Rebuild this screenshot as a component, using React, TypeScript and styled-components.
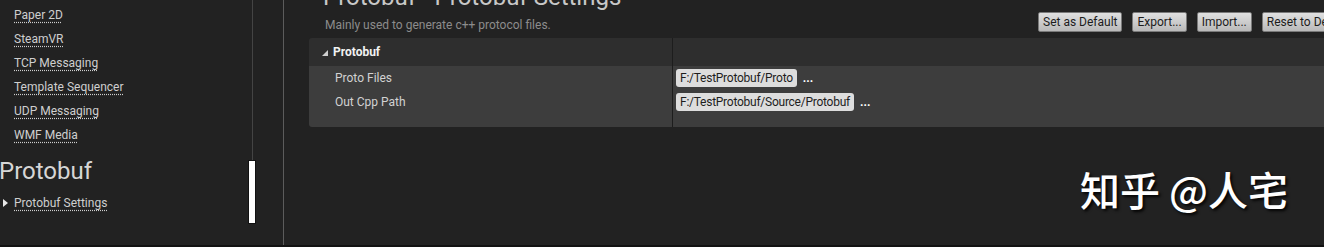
import React from "react";
import styled, { createGlobalStyle } from "styled-components";

const GlobalStyle = createGlobalStyle`
   html, body {
      margin: 0;
      padding: 0;
      background: #222222;
      font-family: Roboto, "Liberation Sans", sans-serif;
      overflow: hidden;
   }
`;

const categories = ["Paper 2D", "SteamVR", "TCP Messaging", "Template Sequencer", "UDP Messaging", "WMF Media"];

const properties = [
   { name: "Proto Files", value: "F:/TestProtobuf/Proto" },
   { name: "Out Cpp Path", value: "F:/TestProtobuf/Source/Protobuf" },
];

const buttons = ["Set as Default", "Export...", "Import...", "Reset to Defaults"];

const App = () => {
   return (
      <>
         <GlobalStyle />
         <Page>
            <Sidebar>
               <NavColumn>
                  <NavList>
                     {categories.map((name) => (
                        <NavItem key={name}>
                           <NavLink>{name}</NavLink>
                        </NavItem>
                     ))}
                  </NavList>
                  <SectionTitle>Protobuf</SectionTitle>
                  <NavItem>
                     <Arrow />
                     <NavLink>Protobuf Settings</NavLink>
                  </NavItem>
               </NavColumn>
               <ScrollBar>
                  <Track />
                  <Thumb />
               </ScrollBar>
            </Sidebar>

            <Main>
               <Header>
                  <HeaderText>
                     <Title>Protobuf - Protobuf Settings</Title>
                     <Subtitle>Mainly used to generate c++ protocol files.</Subtitle>
                  </HeaderText>
                  <ButtonRow>
                     {buttons.map((b) => (
                        <Button key={b}>{b}</Button>
                     ))}
                  </ButtonRow>
               </Header>

               <Panel>
                  <PanelHeader>
                     <NameCell>
                        <Expander />
                        <GroupName>Protobuf</GroupName>
                     </NameCell>
                     <ValueCell />
                  </PanelHeader>
                  <PanelBody>
                     <NameColumn>
                        {properties.map((p) => (
                           <PropName key={p.name}>{p.name}</PropName>
                        ))}
                     </NameColumn>
                     <ValueColumn>
                        {properties.map((p) => (
                           <PropValue key={p.name}>
                              <PathBox>{p.value}</PathBox>
                              <Browse>...</Browse>
                           </PropValue>
                        ))}
                     </ValueColumn>
                  </PanelBody>
               </Panel>
            </Main>

            <Watermark>知乎 @人宅</Watermark>
         </Page>
         <BottomEdge />
      </>
   );
};

const Page = styled.div`
   position: relative;
   display: flex;
   height: 245px;
   overflow: hidden;
`;

const Sidebar = styled.div`
   display: flex;
   width: 284px;
   flex-shrink: 0;
   padding-right: 27px;
   box-sizing: border-box;
   border-right: 1px solid #5c5c5c;
`;

const NavColumn = styled.div`
   width: 248px;
   padding-top: 3px;
`;

const NavList = styled.div`
   display: flex;
   flex-direction: column;
`;

const NavItem = styled.div`
   display: flex;
   align-items: center;
   height: 24px;
   padding-left: 14px;
   position: relative;
`;

const NavLink = styled.span`
   font-size: 12px;
   line-height: 24px;
   color: #cfcfcf;
   text-decoration: underline dotted #cfcfcf;
   text-underline-offset: 3px;
   white-space: nowrap;
`;

const Arrow = styled.span`
   position: absolute;
   left: 3px;
   top: 8px;
   width: 0;
   height: 0;
   border-top: 4px solid transparent;
   border-bottom: 4px solid transparent;
   border-left: 5px solid #e8e8e8;
`;

const SectionTitle = styled.div`
   margin-top: 8px;
   margin-bottom: 4px;
   margin-left: -1px;
   font-size: 24px;
   line-height: 32px;
   color: #d6d6d6;
`;

const ScrollBar = styled.div`
   width: 8px;
   display: flex;
   flex-direction: column;
   align-items: center;
`;

const Track = styled.div`
   width: 1px;
   height: 160px;
   background: #444444;
`;

const Thumb = styled.div`
   width: 6px;
   height: 62px;
   background: #ffffff;
   border: 1px solid #111111;
`;

const Main = styled.div`
   flex: 1;
   min-width: 0;
   overflow: hidden;
   padding-left: 25px;
`;

const Header = styled.div`
   display: flex;
   margin-top: -17px;
   height: 55px;
`;

const HeaderText = styled.div`
   width: 729px;
   flex-shrink: 0;
   padding-left: 14px;
   box-sizing: border-box;
`;

const Title = styled.div`
   font-size: 24px;
   line-height: 28px;
   color: #c8c8c8;
   white-space: nowrap;
`;

const Subtitle = styled.div`
   margin-top: 6px;
   padding-left: 2px;
   font-size: 12px;
   line-height: 16px;
   color: #8c8c8c;
`;

const ButtonRow = styled.div`
   display: flex;
   gap: 10px;
   flex-shrink: 0;
   align-self: flex-end;
   margin-bottom: 6px;
`;

const Button = styled.button`
   height: 20px;
   padding: 0 4px;
   font-family: Roboto, "Liberation Sans", sans-serif;
   font-size: 12px;
   color: #1c1c1c;
   white-space: nowrap;
   background: linear-gradient(#e0e0e0, #b9b9b9);
   border: 1px solid #7a7a7a;
   border-radius: 2px;
`;

const Panel = styled.div`
   margin-right: -6px;
   border-radius: 3px;
   overflow: hidden;
`;

const PanelHeader = styled.div`
   display: flex;
   height: 28px;
   background: #2e2e2e;
`;

const NameCell = styled.div`
   width: 363px;
   display: flex;
   align-items: center;
   padding-left: 13px;
   box-sizing: border-box;
`;

const Expander = styled.span`
   width: 0;
   height: 0;
   border-left: 6px solid transparent;
   border-bottom: 6px solid #cfcfcf;
   margin-right: 5px;
   margin-top: 1px;
`;

const GroupName = styled.span`
   font-size: 12px;
   font-weight: bold;
   color: #f2f2f2;
`;

const ValueCell = styled.div`
   flex: 1;
   border-left: 1px solid #1d1d1d;
`;

const PanelBody = styled.div`
   display: flex;
   background: #3d3d3d;
`;

const NameColumn = styled.div`
   width: 363px;
   padding-bottom: 13px;
`;

const PropName = styled.div`
   height: 24px;
   line-height: 24px;
   padding-left: 26px;
   font-size: 12px;
   color: #d2d2d2;
`;

const ValueColumn = styled.div`
   flex: 1;
   border-left: 1px solid #1d1d1d;
   padding-bottom: 13px;
`;

const PropValue = styled.div`
   display: flex;
   align-items: center;
   height: 24px;
   padding-left: 3px;
`;

const PathBox = styled.span`
   height: 18px;
   line-height: 18px;
   padding: 0 4px;
   font-size: 12px;
   letter-spacing: -0.25px;
   color: #1e1e1e;
   background: #dddddd;
   border-radius: 3px;
   white-space: nowrap;
`;

const Browse = styled.span`
   margin-left: 6px;
   font-size: 12px;
   font-weight: bold;
   color: #ffffff;
   line-height: 18px;
`;

const Watermark = styled.div`
   position: absolute;
   left: 1080px;
   top: 169px;
   font-family: "Noto Sans CJK SC", sans-serif;
   font-size: 40px;
   font-weight: 500;
   line-height: 40px;
   color: #ffffff;
   white-space: nowrap;
   text-shadow: 2px 2px 3px rgba(0, 0, 0, 0.9);
`;

const BottomEdge = styled.div`
   height: 2px;
   background: #121212;
`;

export default App;
